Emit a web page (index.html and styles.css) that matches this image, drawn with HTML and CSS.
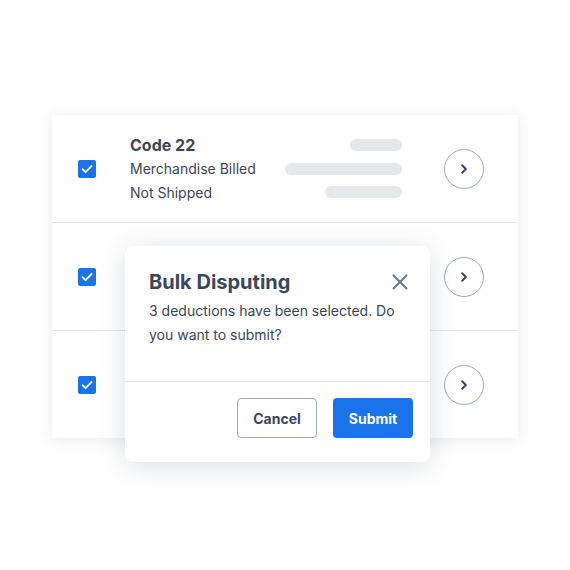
FILE: index.html
```html
<!DOCTYPE html>
<html>
<head>
<meta charset="utf-8">
<link rel="stylesheet" href="styles.css">
</head>
<body>
<div class="stage">
  <div class="card">
    <div class="row">
      <span class="check"><svg width="18" height="18" viewBox="0 0 18 18"><path d="M4.5 9.2 L7.6 12.2 L13.6 6" fill="none" stroke="#fff" stroke-width="1.8" stroke-linecap="round" stroke-linejoin="round"/></svg></span>
      <div class="info">
        <div class="code">Code 22</div>
        <div class="line">Merchandise Billed</div>
        <div class="line">Not Shipped</div>
      </div>
      <div class="bars">
        <div class="barrow"><span class="bar b1"></span></div>
        <div class="barrow"><span class="bar b2"></span></div>
        <div class="barrow"><span class="bar b3"></span></div>
      </div>
      <span class="go"><svg width="12" height="12" viewBox="0 0 12 12"><path d="M4.2 2.3 L7.8 6 L4.2 9.7" fill="none" stroke="#3a465a" stroke-width="2" stroke-linecap="round" stroke-linejoin="round"/></svg></span>
    </div>
    <div class="row">
      <span class="check"><svg width="18" height="18" viewBox="0 0 18 18"><path d="M4.5 9.2 L7.6 12.2 L13.6 6" fill="none" stroke="#fff" stroke-width="1.8" stroke-linecap="round" stroke-linejoin="round"/></svg></span>
      <div class="info"></div>
      <span class="go"><svg width="12" height="12" viewBox="0 0 12 12"><path d="M4.2 2.3 L7.8 6 L4.2 9.7" fill="none" stroke="#3a465a" stroke-width="2" stroke-linecap="round" stroke-linejoin="round"/></svg></span>
    </div>
    <div class="row">
      <span class="check"><svg width="18" height="18" viewBox="0 0 18 18"><path d="M4.5 9.2 L7.6 12.2 L13.6 6" fill="none" stroke="#fff" stroke-width="1.8" stroke-linecap="round" stroke-linejoin="round"/></svg></span>
      <div class="info"></div>
      <span class="go"><svg width="12" height="12" viewBox="0 0 12 12"><path d="M4.2 2.3 L7.8 6 L4.2 9.7" fill="none" stroke="#3a465a" stroke-width="2" stroke-linecap="round" stroke-linejoin="round"/></svg></span>
    </div>

    <div class="modal">
      <div class="mbody">
        <div class="mhead">
          <div class="mtitle">Bulk Disputing</div>
          <span class="close"><svg width="16" height="16" viewBox="0 0 16 16"><path d="M1.5 1.5 L14.5 14.5 M14.5 1.5 L1.5 14.5" fill="none" stroke="#6b7585" stroke-width="2" stroke-linecap="round"/></svg></span>
        </div>
        <p class="mtext">3 deductions have been selected. Do you want to submit?</p>
      </div>
      <div class="mfoot">
        <button class="btn cancel">Cancel</button>
        <button class="btn submit">Submit</button>
      </div>
    </div>
  </div>
</div>
</body>
</html>
```

FILE: styles.css
```css
* { box-sizing: border-box; }
html, body { margin: 0; padding: 0; background: #fff; }
body {
  font-family: Inter, "Noto Sans", sans-serif;
  color: #3a465a;
  width: 570px;
  height: 570px;
  overflow: hidden;
}
.stage {
  padding: 115px 0 0 52px;
}
.card {
  position: relative;
  width: 466px;
  background: #fff;
  box-shadow: 0 2px 14px rgba(40, 50, 70, 0.10);
}
.row {
  display: flex;
  align-items: center;
  height: 107px;
  padding: 0 34px 0 26px;
}
.row + .row {
  height: 108px;
  border-top: 1px solid #e2e6ea;
}
.check {
  width: 18px;
  height: 18px;
  border-radius: 2px;
  background: #1a73e8;
  display: flex;
  flex: none;
  margin-right: 34px;
}
.info {
  flex: 1;
}
.code {
  font-size: 16px;
  font-weight: 700;
  line-height: 24px;
}
.line {
  font-size: 14px;
  line-height: 24px;
}
.bars {
  display: flex;
  flex-direction: column;
  align-items: flex-end;
  margin-right: 42px;
}
.barrow {
  height: 23.5px;
  display: flex;
  align-items: center;
}
.bar {
  display: block;
  height: 12px;
  border-radius: 6px;
  background: #e5e9ec;
}
.b1 { width: 52px; }
.b2 { width: 117px; }
.b3 { width: 77px; }
.go {
  width: 40px;
  height: 40px;
  flex: none;
  border-radius: 50%;
  border: 1px solid #a2aab7;
  display: flex;
  align-items: center;
  justify-content: center;
}
.modal {
  position: absolute;
  left: 73px;
  top: 131px;
  width: 305px;
  background: #fff;
  border-radius: 8px;
  box-shadow: 0 4px 28px rgba(40, 50, 70, 0.16);
}
.mbody {
  padding: 22px 22px 34px 24px;
  border-bottom: 1px solid #e2e6ea;
}
.mhead {
  display: flex;
  align-items: center;
  justify-content: space-between;
}
.mtitle {
  font-size: 20px;
  font-weight: 700;
  line-height: 28px;
}
.close {
  display: flex;
  width: 16px;
  height: 16px;
}
.mtext {
  margin: 3px 0 0;
  font-size: 14px;
  line-height: 24px;
}
.mfoot {
  display: flex;
  justify-content: flex-end;
  gap: 16px;
  padding: 16px 17px 24px;
}
.btn {
  width: 80px;
  height: 40px;
  border-radius: 4px;
  font-family: Inter, "Noto Sans", sans-serif;
  font-size: 14px;
  font-weight: 700;
  cursor: pointer;
}
.cancel {
  background: #fff;
  color: #3a465a;
  border: 1px solid #a2aab7;
}
.submit {
  background: #1a73e8;
  color: #fff;
  border: none;
}
```
